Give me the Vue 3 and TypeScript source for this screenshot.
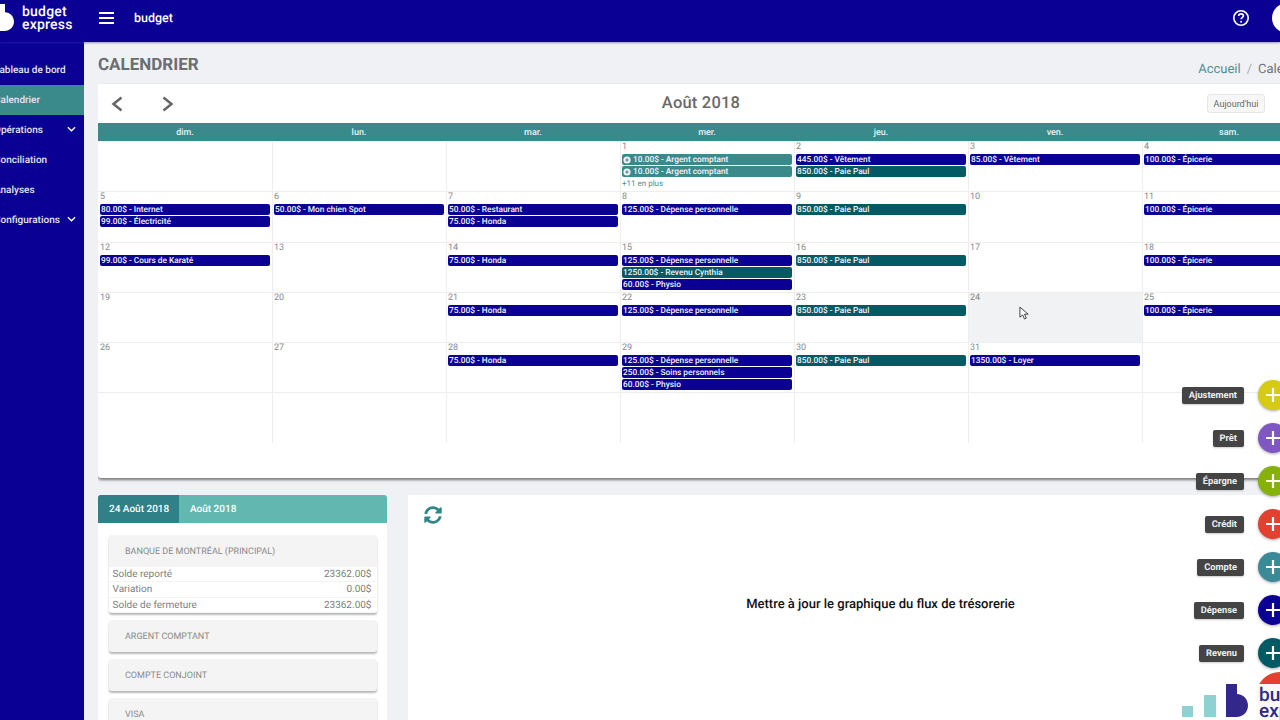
<template>
  <div class="app">
    <header class="topbar">
      <div class="brand">
        <svg class="brand-mark" viewBox="0 0 22 33"><path :d="markPath" fill="#fff" /></svg>
        <div class="brand-name">budget<br />express</div>
      </div>
      <button class="burger" aria-label="menu"><span></span><span></span><span></span></button>
      <span class="book">budget</span>
      <svg class="help" viewBox="0 0 20 20">
        <circle cx="10" cy="10" r="8" fill="none" stroke="#fff" stroke-width="1.8" />
        <path d="M7.4 7.9c0-1.600 1.200-2.500 2.700-2.500s2.600.9 2.600 2.200c0 1.900-2.600 2-2.600 3.900" fill="none" stroke="#fff" stroke-width="1.8" />
        <circle cx="10.100" cy="14.200" r="1.100" fill="#fff" />
      </svg>
      <div class="avatar"></div>
    </header>

    <div class="body">
      <nav class="sidebar">
        <a v-for="item in menu" :key="item.label" class="nav-item" :class="{ active: item.active }">
          <span>{{ item.label }}</span>
          <svg v-if="item.sub" class="nav-chevron" viewBox="0 0 10 6"><path d="M1 1l4 4 4-4" fill="none" stroke="#fff" stroke-width="1.5" /></svg>
        </a>
      </nav>

      <main class="content">
        <div class="page-head">
          <h1>Calendrier</h1>
          <div class="crumbs"><a>Accueil</a><i>/</i><span>Calendrier</span></div>
        </div>

        <section class="calendar">
          <div class="toolbar">
            <div class="cal-nav">
              <svg viewBox="0 0 14 16"><path d="M11.500 1.500L3.500 8l8 6.500" fill="none" stroke="#666" stroke-width="2.500" /></svg>
              <svg viewBox="0 0 14 16"><path d="M2.500 1.500l8 6.500-8 6.500" fill="none" stroke="#666" stroke-width="2.500" /></svg>
            </div>
            <h2>Août 2018</h2>
            <button class="today-btn">Aujourd'hui</button>
          </div>
          <div class="weekdays">
            <div v-for="d in weekdays" :key="d">{{ d }}</div>
          </div>
          <div v-for="(week, w) in weeks" :key="w" class="week">
            <div v-for="(day, i) in week" :key="i" class="day" :class="{ current: day.n === 24 }">
              <div class="day-num">{{ day.n }}</div>
              <div v-for="(ev, k) in day.events" :key="k" class="event" :class="ev.kind">
                <svg v-if="ev.kind === 'transfer'" class="ev-icon" viewBox="0 0 10 10">
                  <circle cx="5" cy="5" r="4.500" fill="#f2f2f2" />
                  <path d="M2.800 5h4.400M5 2.800v4.400" stroke="#3a8a8c" stroke-width="1.300" />
                </svg>
                {{ ev.text }}
              </div>
              <a v-if="day.more" class="more">{{ day.more }}</a>
            </div>
          </div>
        </section>

        <div class="lower">
          <section class="balances">
            <div class="tabs">
              <a class="tab current">24 Août 2018</a>
              <a class="tab">Août 2018</a>
            </div>
            <div class="accounts">
              <div class="account">
                <div class="account-name">Banque de Montréal (principal)</div>
                <div v-for="row in balanceRows" :key="row[0]" class="balance-row">
                  <span>{{ row[0] }}</span><span>{{ row[1] }}</span>
                </div>
              </div>
              <div v-for="a in otherAccounts" :key="a" class="account">
                <div class="account-name">{{ a }}</div>
              </div>
            </div>
          </section>
          <section class="cashflow">
            <svg class="refresh" viewBox="0 0 512 512"><path fill="#2f8587" d="M370.72 133.28C339.458 104.008 298.888 87.962 255.848 88c-77.458.068-144.328 53.178-162.791 126.85-1.344 5.363-6.122 9.15-11.651 9.15H24.103c-7.498 0-13.194-6.807-11.807-14.176C33.933 94.924 134.813 8 256 8c66.448 0 126.791 26.136 171.315 68.685L463.03 40.97C478.149 25.851 504 36.559 504 57.941V192c0 13.255-10.745 24-24 24H345.941c-21.382 0-32.09-25.851-16.971-40.971l41.75-41.749zM32 296h134.059c21.382 0 32.09 25.851 16.971 40.971l-41.75 41.75c31.262 29.273 71.835 45.319 114.876 45.28 77.418-.07 144.315-53.144 162.787-126.849 1.344-5.363 6.122-9.15 11.651-9.15h57.304c7.498 0 13.194 6.807 11.807 14.176C478.067 417.076 377.187 504 256 504c-66.448 0-126.791-26.136-171.315-68.685L48.97 471.03C33.851 486.149 8 475.441 8 454.059V320c0-13.255 10.745-24 24-24z" /></svg>
            <p>Mettre à jour le graphique du flux de trésorerie</p>
          </section>
        </div>
      </main>
    </div>

    <div class="fabs">
      <div v-for="f in fabs" :key="f.label" class="fab-row">
        <span class="fab-label">{{ f.label }}</span>
        <span class="fab" :style="{ background: f.color }">
          <svg viewBox="0 0 16 16"><path d="M8 1v14M1 8h14" stroke="#fff" stroke-width="2.200" /></svg>
        </span>
      </div>
    </div>
    <div class="fab-main"></div>

    <div class="watermark">
      <i class="bar small"></i>
      <i class="bar tall"></i>
      <svg viewBox="0 0 22 33"><path :d="markPath" fill="#33288a" /></svg>
      <div class="wm-name">budget<br />express</div>
    </div>

    <svg class="cursor" viewBox="0 0 12 16"><path d="M1 1v11l3-2.500 2 4.500 2-1-2-4.300h4z" fill="#fff" stroke="#333" stroke-width="1" /></svg>
  </div>
</template>

<script setup lang="ts">
type EventKind = 'expense' | 'income' | 'transfer'

interface CalEvent {
  text: string
  kind: EventKind
}

interface Day {
  n: number | string
  events: CalEvent[]
  more?: string
}

const markPath = 'M0 0h11v10c6 0 11 5 11 11.500S17 33 10.500 33H0z'

const menu = [
  { label: 'Tableau de bord' },
  { label: 'Calendrier', active: true },
  { label: 'Opérations', sub: true },
  { label: 'Conciliation' },
  { label: 'Analyses' },
  { label: 'Configurations', sub: true }
]

const weekdays = ['dim.', 'lun.', 'mar.', 'mer.', 'jeu.', 'ven.', 'sam.']

const exp = (text: string): CalEvent => ({ text, kind: 'expense' })
const inc = (text: string): CalEvent => ({ text, kind: 'income' })
const tr = (text: string): CalEvent => ({ text, kind: 'transfer' })

const paie = inc('850.00$ - Paie Paul')
const epicerie = exp('100.00$ - Épicerie')
const honda = exp('75.00$ - Honda')
const depense = exp('125.00$ - Dépense personnelle')

const weeks: Day[][] = [
  [
    { n: '', events: [] },
    { n: '', events: [] },
    { n: '', events: [] },
    { n: 1, events: [tr('10.00$ - Argent comptant'), tr('10.00$ - Argent comptant')], more: '+11 en plus' },
    { n: 2, events: [exp('445.00$ - Vêtement'), paie] },
    { n: 3, events: [exp('85.00$ - Vêtement')] },
    { n: 4, events: [epicerie] }
  ],
  [
    { n: 5, events: [exp('80.00$ - Internet'), exp('99.00$ - Électricité')] },
    { n: 6, events: [exp('50.00$ - Mon chien Spot')] },
    { n: 7, events: [exp('50.00$ - Restaurant'), honda] },
    { n: 8, events: [depense] },
    { n: 9, events: [paie] },
    { n: 10, events: [] },
    { n: 11, events: [epicerie] }
  ],
  [
    { n: 12, events: [exp('99.00$ - Cours de Karaté')] },
    { n: 13, events: [] },
    { n: 14, events: [honda] },
    { n: 15, events: [depense, inc('1250.00$ - Revenu Cynthia'), exp('60.00$ - Physio')] },
    { n: 16, events: [paie] },
    { n: 17, events: [] },
    { n: 18, events: [epicerie] }
  ],
  [
    { n: 19, events: [] },
    { n: 20, events: [] },
    { n: 21, events: [honda] },
    { n: 22, events: [depense] },
    { n: 23, events: [paie] },
    { n: 24, events: [] },
    { n: 25, events: [epicerie] }
  ],
  [
    { n: 26, events: [] },
    { n: 27, events: [] },
    { n: 28, events: [honda] },
    { n: 29, events: [depense, exp('250.00$ - Soins personnels'), exp('60.00$ - Physio')] },
    { n: 30, events: [paie] },
    { n: 31, events: [exp('1350.00$ - Loyer')] },
    { n: '', events: [] }
  ],
  [
    { n: '', events: [] },
    { n: '', events: [] },
    { n: '', events: [] },
    { n: '', events: [] },
    { n: '', events: [] },
    { n: '', events: [] },
    { n: '', events: [] }
  ]
]

const balanceRows = [
  ['Solde reporté', '23362.00$'],
  ['Variation', '0.00$'],
  ['Solde de fermeture', '23362.00$']
]

const otherAccounts = ['Argent comptant', 'Compte conjoint', 'Visa']

const fabs = [
  { label: 'Ajustement', color: '#d6cb12' },
  { label: 'Prêt', color: '#7e57c2' },
  { label: 'Épargne', color: '#86b00a' },
  { label: 'Crédit', color: '#e2412f' },
  { label: 'Compte', color: '#3a8a98' },
  { label: 'Dépense', color: '#0b0094' },
  { label: 'Revenu', color: '#045a64' }
]
</script>

<style>
html,
body {
  margin: 0;
  overflow: hidden;
}
</style>

<style scoped>
.app {
  position: relative;
  width: 1280px;
  height: 720px;
  overflow: hidden;
  display: flex;
  flex-direction: column;
  background: #f0f1f5;
  font-family: Roboto, "Liberation Sans", sans-serif;
  color: #666;
  text-rendering: geometricPrecision;
}

.topbar {
  height: 42px;
  flex: none;
  display: flex;
  align-items: center;
  background: #0b0094;
  color: #fff;
  box-shadow: 0 1px 2px rgba(60, 50, 180, 0.5);
  z-index: 2;
}

.brand {
  width: 99px;
  flex: none;
  display: flex;
  align-items: center;
  height: 100%;
}

.brand-mark {
  width: 18px;
  height: 27px;
  margin-left: -4px;
  margin-right: 8px;
  margin-top: -8px;
}

.brand-name {
  font-size: 14px;
  font-weight: 500;
  line-height: 13px;
  letter-spacing: 0.2px;
  margin-top: -4px;
}

.burger {
  width: 15px;
  height: 12px;
  padding: 0;
  border: 0;
  background: none;
  display: flex;
  flex-direction: column;
  justify-content: space-between;
  margin-top: -6px;
}

.burger span {
  display: block;
  height: 2px;
  background: #fff;
}

.book {
  margin-left: 20px;
  margin-top: -6px;
  font-size: 12.500px;
  font-weight: 500;
}

.help {
  width: 18px;
  height: 18px;
  margin-left: auto;
  margin-right: 22px;
  margin-top: -6px;
}

.avatar {
  width: 30px;
  height: 30px;
  flex: none;
  margin-right: -22px;
  margin-top: -6px;
  border-radius: 50%;
  background: #fff;
}

.body {
  flex: 1;
  display: flex;
  min-height: 0;
}

.sidebar {
  width: 84px;
  flex: none;
  padding-top: 13px;
  background: #0b0094;
  overflow: hidden;
}

.nav-item {
  height: 30px;
  box-sizing: border-box;
  display: flex;
  align-items: center;
  justify-content: space-between;
  padding: 1px 8px 0 0;
  margin-left: -6px;
  color: #e4e4f4;
  font-size: 10px;
  font-weight: 500;
  white-space: nowrap;
}

.nav-item.active {
  background: #3a8a8c;
}

.nav-chevron {
  width: 9px;
  height: 6px;
  margin-top: -3px;
}

.content {
  width: 1218px;
  flex: none;
  margin-left: 14px;
  overflow: hidden;
}

.page-head {
  height: 42px;
  display: flex;
  align-items: center;
  justify-content: space-between;
}

.page-head h1 {
  margin: 4px 0 0;
  font-size: 17px;
  font-weight: 700;
  text-transform: uppercase;
  color: #6a6d72;
}

.crumbs {
  font-size: 13px;
  color: #6c757d;
  margin: 13px -1px 0 0;
}

.crumbs a {
  color: #4f8f93;
}

.crumbs i {
  margin: 0 6px;
  font-style: normal;
  color: #aaa;
}

.calendar {
  height: 394px;
  background: #fff;
  box-shadow: 0 2px 3px rgba(0, 0, 0, 0.5);
  border-radius: 0 0 3px 3px;
}

.toolbar {
  height: 39px;
  box-sizing: border-box;
  display: flex;
  align-items: center;
  justify-content: space-between;
  padding: 0 51px 0 0;
}

.cal-nav {
  width: 97px;
  display: flex;
  gap: 35px;
  padding-left: 12px;
  box-sizing: border-box;
}

.cal-nav svg {
  width: 14px;
  height: 16px;
  flex: none;
  margin-right: 2px;
}

.toolbar h2 {
  margin: 0;
  font-size: 16.500px;
  font-weight: 500;
  color: #6a6a6a;
  letter-spacing: 0.2px;
}

.today-btn {
  width: 58px;
  height: 19px;
  padding: 0;
  border: 1px solid #e6e6e6;
  border-radius: 3px;
  background: #f7f7f7;
  color: #666;
  font-family: inherit;
  font-size: 9px;
}

.weekdays {
  height: 18px;
  box-sizing: border-box;
  padding-top: 1px;
  display: grid;
  grid-template-columns: repeat(7, 1fr);
  align-items: center;
  background: #3a8a8c;
  color: #e4f2f2;
  font-size: 9px;
  font-weight: 500;
  text-align: center;
}

.week {
  height: 50.300px;
  display: grid;
  grid-template-columns: repeat(7, 1fr);
  border-top: 1px solid #eee;
  box-sizing: border-box;
}

.week:first-of-type {
  border-top-color: transparent;
}

.day {
  min-width: 0;
  padding: 0 2px 0 1px;
  border-left: 1px solid #eee;
  overflow: hidden;
}

.day:first-child {
  border-left-color: transparent;
}

.day.current {
  background: #f1f2f4;
}

.day-num {
  height: 12px;
  font-size: 9px;
  line-height: 10px;
  color: #888;
}

.event {
  height: 11px;
  box-sizing: border-box;
  margin-bottom: 1px;
  padding: 1px 0 0 1px;
  display: flex;
  align-items: center;
  gap: 2px;
  border-radius: 2px;
  color: #f4f4fa;
  font-size: 8.300px;
  font-weight: 500;
  line-height: 10px;
  white-space: nowrap;
  overflow: hidden;
}

.event.expense {
  background: #0b0094;
}

.event.income {
  background: #045a64;
}

.event.transfer {
  background: #3a8a8c;
}

.ev-icon {
  width: 8px;
  height: 8px;
  flex: none;
  margin: -1px 0 0;
}

.more {
  display: block;
  font-size: 8px;
  line-height: 11px;
  color: #4f8f8f;
}

.lower {
  display: grid;
  grid-template-columns: 289px 1fr;
  gap: 21px;
  margin-top: 17px;
}

.balances {
  background: #fff;
  height: 240px;
  border-radius: 3px 3px 0 0;
}

.tabs {
  height: 28px;
  display: flex;
  background: #62b8b0;
  border-radius: 3px 3px 0 0;
  overflow: hidden;
}

.tab {
  display: flex;
  align-items: center;
  padding: 0 11px;
  color: #fff;
  font-size: 10px;
  font-weight: 500;
  white-space: nowrap;
}

.tab.current {
  background: #2f8087;
  width: 81px;
  padding-right: 0;
  box-sizing: border-box;
}

.accounts {
  display: flex;
  flex-direction: column;
  gap: 7px;
  padding: 12px 10.500px 0;
}

.account {
  background: #f4f4f4;
  border-radius: 3px;
  box-shadow: 0 2px 2px rgba(0, 0, 0, 0.28);
}

.account-name {
  height: 32px;
  box-sizing: border-box;
  display: flex;
  align-items: center;
  padding: 2px 0 0 16.500px;
  color: #8a8a8a;
  font-size: 9px;
  text-transform: uppercase;
}

.balance-row {
  height: 14.300px;
  margin-bottom: 1px;
  box-sizing: border-box;
  display: flex;
  justify-content: space-between;
  align-items: center;
  padding: 1px 5px 0 4px;
  background: #fff;
  color: #808080;
  font-size: 10px;
}

.cashflow {
  height: 240px;
  background: #fff;
}

.refresh {
  display: block;
  width: 18px;
  height: 18px;
  margin: 11px 0 0 16px;
}

.cashflow p {
  margin: 73px 0 0;
  padding-left: 37px;
  text-align: center;
  color: #111;
  font-size: 13px;
  font-weight: 500;
}

.fabs {
  position: absolute;
  top: 380px;
  left: 1150px;
  width: 138px;
  display: flex;
  flex-direction: column;
  gap: 13px;
  align-items: flex-end;
}

.fab-row {
  height: 30px;
  display: flex;
  align-items: center;
  gap: 14px;
}

.fab-label {
  height: 17px;
  padding: 0 7px;
  display: flex;
  align-items: center;
  border-radius: 2px;
  background: #444;
  color: #eee;
  font-size: 9.300px;
  font-weight: 700;
  box-shadow: 0 1px 2px rgba(0, 0, 0, 0.2);
}

.fab {
  width: 30px;
  height: 30px;
  display: flex;
  align-items: center;
  justify-content: center;
  border-radius: 50%;
  box-shadow: 0 1px 3px rgba(0, 0, 0, 0.35);
}

.fab svg {
  width: 16px;
  height: 16px;
}

.fab-main {
  position: absolute;
  top: 672px;
  left: 1256px;
  width: 48px;
  height: 48px;
  border-radius: 50%;
  background: #e2412f;
}

.watermark {
  position: absolute;
  left: 1177px;
  top: 684px;
  width: 120px;
  height: 36px;
  box-sizing: border-box;
  padding: 0 0 3px 5px;
  display: flex;
  align-items: flex-end;
  background: rgba(255, 255, 255, 0.96);
}

.bar {
  display: block;
  flex: none;
  background: #8fd1d3;
}

.bar.small {
  width: 11px;
  height: 11px;
  margin-right: 11px;
}

.bar.tall {
  width: 12px;
  height: 22px;
  margin-right: 10px;
}

.watermark svg {
  width: 22px;
  height: 33px;
  flex: none;
}

.wm-name {
  flex: none;
  margin: 0 0 -2px 11px;
  color: #2e2a85;
  font-size: 19px;
  font-weight: 500;
  line-height: 16px;
}

.cursor {
  position: absolute;
  left: 1019px;
  top: 306px;
  width: 11px;
  height: 15px;
}
</style>
